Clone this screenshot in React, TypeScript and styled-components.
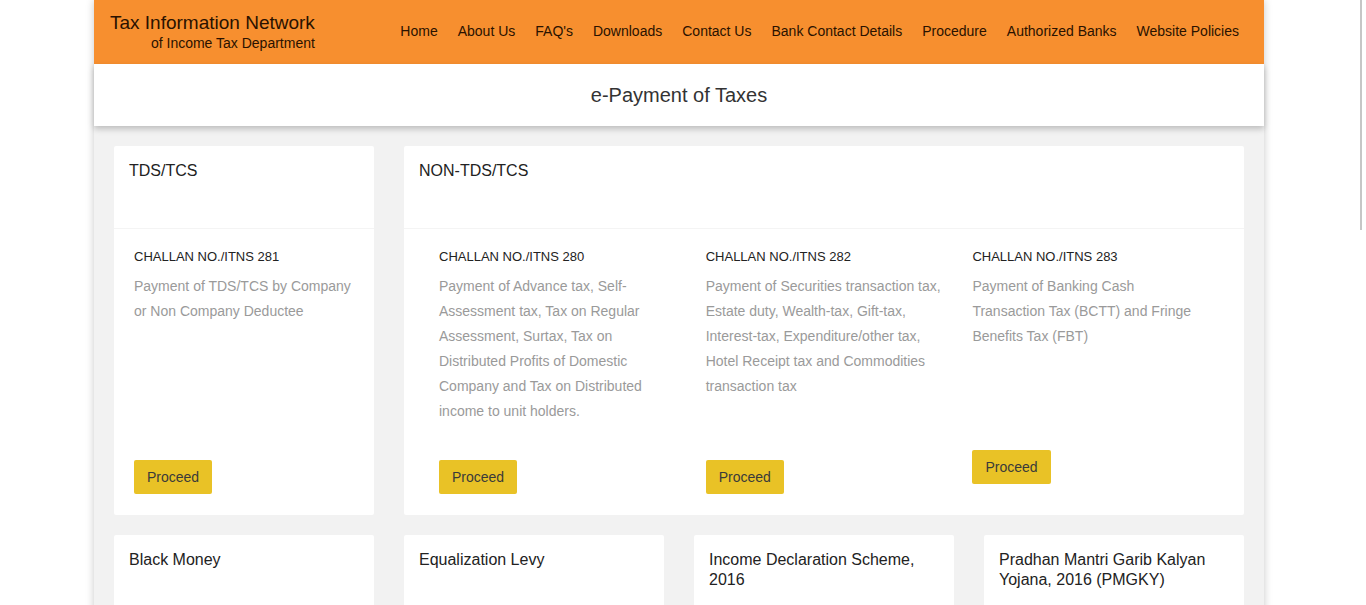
import React from 'react'
import styled, { createGlobalStyle } from 'styled-components'

const GlobalStyle = createGlobalStyle`
  html, body {
    margin: 0;
    padding: 0;
    background: #ffffff;
    font-family: "Liberation Sans", Arial, sans-serif;
  }
  body {
    padding-right: 8px;
  }
  ::-webkit-scrollbar {
    width: 0;
    height: 0;
  }
`

const navItems = [
  'Home',
  'About Us',
  "FAQ's",
  'Downloads',
  'Contact Us',
  'Bank Contact Details',
  'Procedure',
  'Authorized Banks',
  'Website Policies',
]

const nonTds = [
  {
    challan: 'CHALLAN NO./ITNS 280',
    text: 'Payment of Advance tax, Self-Assessment tax, Tax on Regular Assessment, Surtax, Tax on Distributed Profits of Domestic Company and Tax on Distributed income to unit holders.',
    lift: 0,
  },
  {
    challan: 'CHALLAN NO./ITNS 282',
    text: 'Payment of Securities transaction tax, Estate duty, Wealth-tax, Gift-tax, Interest-tax, Expenditure/other tax, Hotel Receipt tax and Commodities transaction tax',
    lift: 0,
  },
  {
    challan: 'CHALLAN NO./ITNS 283',
    text: 'Payment of Banking Cash Transaction Tax (BCTT) and Fringe Benefits Tax (FBT)',
    lift: 10,
  },
]

const others = [
  'Black Money',
  'Equalization Levy',
  'Income Declaration Scheme, 2016',
  'Pradhan Mantri Garib Kalyan Yojana, 2016 (PMGKY)',
]

const App = () => {
  return (
    <>
      <GlobalStyle />
      <ScrollThumb />
      <Page>
        <Header>
          <Logo>
            <LogoTitle>Tax Information Network</LogoTitle>
            <LogoSub>of Income Tax Department</LogoSub>
          </Logo>
          <Nav>
            {navItems.map((item) => (
              <NavItem key={item} href="#">{item}</NavItem>
            ))}
          </Nav>
        </Header>

        <TitleBar>e-Payment of Taxes</TitleBar>

        <Content>
          <Grid>
            <Card>
              <CardHead>TDS/TCS</CardHead>
              <CardBody>
                <Column>
                  <Challan>CHALLAN NO./ITNS 281</Challan>
                  <Desc>Payment of TDS/TCS by Company or Non Company Deductee</Desc>
                  <Proceed lift={0}>Proceed</Proceed>
                </Column>
              </CardBody>
            </Card>

            <Card span={3}>
              <CardHead>NON-TDS/TCS</CardHead>
              <CardBody cols={3} inset={15}>
                {nonTds.map((c) => (
                  <Column key={c.challan} wide>
                    <Challan>{c.challan}</Challan>
                    <Desc>{c.text}</Desc>
                    <Proceed lift={c.lift}>Proceed</Proceed>
                  </Column>
                ))}
              </CardBody>
            </Card>

            {others.map((o) => (
              <Card key={o}>
                <SmallHead>{o}</SmallHead>
              </Card>
            ))}
          </Grid>
        </Content>
      </Page>
    </>
  )
}

export default App

// thin scrollbar thumb drawn over the right edge of the viewport
const ScrollThumb = styled.div`
  position: fixed;
  top: 0;
  right: 4px;
  width: 2px;
  height: 230px;
  background: #c6c6c6;
  z-index: 10;
`
const Page = styled.div`
  width: 1170px;
  margin: 0 auto;
  box-shadow: 0 0 8px rgba(0, 0, 0, 0.22);
  background: #f2f2f2;
`
const Header = styled.div`
  height: 64px;
  background: #f78f2f;
  display: flex;
  align-items: center;
  justify-content: space-between;
  padding: 0 25px 0 16px;
`
const Logo = styled.div`
  display: flex;
  flex-direction: column;
  align-items: flex-end;
  color: #2a1200;
`
const LogoTitle = styled.div`
  font-size: 19px;
  line-height: 22px;
`
const LogoSub = styled.div`
  font-size: 14px;
  line-height: 18px;
`
const Nav = styled.nav`
  display: flex;
  gap: 20px;
  margin-top: -2px;
`
const NavItem = styled.a`
  font-size: 14px;
  color: #2a1200;
  text-decoration: none;
`
const TitleBar = styled.div`
  height: 62px;
  background: #ffffff;
  display: flex;
  align-items: center;
  justify-content: center;
  font-size: 20px;
  color: #333333;
  box-shadow: 0 3px 6px rgba(0, 0, 0, 0.22);
  position: relative;
`
const Content = styled.div`
  padding: 20px 20px 40px;
  min-height: 1400px;
`
const Grid = styled.div`
  display: grid;
  grid-template-columns: repeat(4, 260px);
  column-gap: 30px;
  row-gap: 20px;
`
const Card = styled.div<{ span?: number }>`
  grid-column: span ${(p) => p.span || 1};
  background: #ffffff;
  border-radius: 2px;
  display: flex;
  flex-direction: column;
  min-height: 369px;
`
const CardHead = styled.div`
  height: 83px;
  box-sizing: border-box;
  padding: 15px 15px;
  font-size: 16px;
  line-height: 20px;
  color: #222222;
  border-bottom: 1px solid #f4f4f4;
`
const SmallHead = styled.div`
  padding: 15px 15px;
  font-size: 16px;
  line-height: 20px;
  color: #222222;
`
const CardBody = styled.div<{ cols?: number; inset?: number }>`
  flex: 1;
  display: grid;
  grid-template-columns: repeat(${(p) => p.cols || 1}, ${(p) => (p.cols ? '266.7px' : '1fr')});
  padding: 18px 0 21px ${(p) => p.inset || 0}px;
`
const Column = styled.div<{ wide?: boolean }>`
  display: flex;
  flex-direction: column;
  align-items: flex-start;
  padding: 0 ${(p) => (p.wide ? '10px' : '20px')} 0 20px;
`
const Challan = styled.div`
  font-size: 13px;
  line-height: 20px;
  color: #222222;
`
const Desc = styled.div`
  font-size: 14px;
  line-height: 25px;
  color: #9a9a9a;
  margin-top: 7px;
`
const Proceed = styled.button<{ lift: number }>`
  margin-top: auto;
  margin-bottom: ${(p) => p.lift}px;
  height: 34px;
  padding: 0 13px;
  border: none;
  border-radius: 2px;
  background: #e9c226;
  color: #3a3a3a;
  font-family: "Liberation Sans", Arial, sans-serif;
  font-size: 14px;
  cursor: pointer;
`
